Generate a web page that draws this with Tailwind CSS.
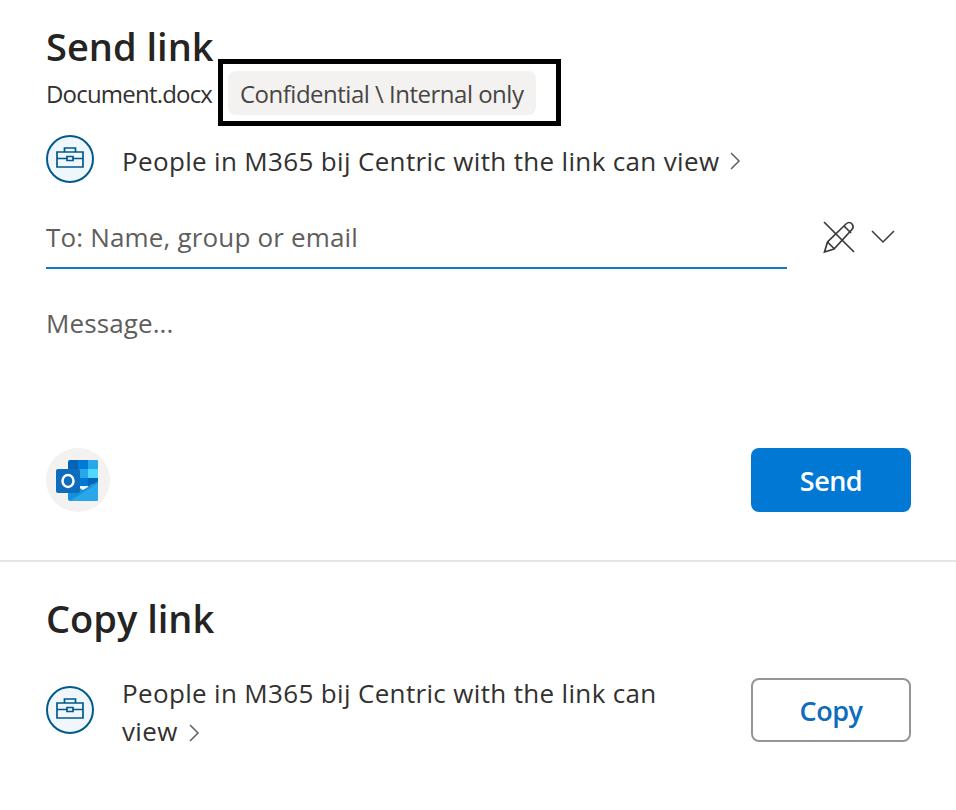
<!DOCTYPE html>
<html lang="en">
<head>
    <meta charset="UTF-8">
    <meta name="viewport" content="width=device-width, initial-scale=1.0">
    <script src="https://cdn.jsdelivr.net/npm/@tailwindcss/browser@4"></script>
    <title>Send link</title>
</head>
<body class="bg-white font-['Open_Sans',sans-serif] text-[#323130]">

<div class="relative w-[956px] h-[810px] overflow-hidden">
    <!-- send link -->
    <div class="h-[562px] border-b-2 border-[#e6e6e6] pl-[46px] pr-[45px] pt-[20px]">
        <h1 class="text-[38px] leading-[52px] font-semibold h-[52px] text-[#252423]">Send link</h1>

        <div class="flex items-center h-[44px] mt-[-1px]">
            <span class="text-[24px] tracking-[-0.8px] w-[182px] pt-[2px]">Document.docx</span>
            <span class="flex items-center w-[308px] h-[44px] rounded-lg bg-[#f3f2f1] pl-3 pt-[2px] text-[24px] tracking-[-0.5px] text-[#484644]">Confidential \ Internal only</span>
        </div>

        <div class="flex items-center h-[48px] mt-[20px]">
            <svg class="w-[48px] h-[48px] shrink-0" viewBox="0 0 48 48" fill="none">
                <circle cx="24" cy="24" r="23" fill="#eff6fc" stroke="#005a8c" stroke-width="2"/>
                <path d="M11 17h26v15H11zM11 23.500h10M27 23.500h10M18.500 17v-4h11v4M21 21.500h6v4h-6z" stroke="#005a8c" stroke-width="1.700"/>
            </svg>
            <span class="ml-[28px] pt-[4px] text-[26px] tracking-[0.34px]">People in M365 bij Centric with the link can view</span>
            <svg class="ml-[10px] mt-[4px] w-[12px] h-[20px]" viewBox="0 0 12 20" fill="none"><path d="M2 2l8 8-8 8" stroke="#605e5c" stroke-width="1.500"/></svg>
        </div>

        <div class="flex items-start mt-[26px]">
            <div class="w-[741px] h-[60px] border-b-2 border-[#0f7cbd] text-[26px] leading-[56px] tracking-[0.17px] text-[#605e5c]">To: Name, group or email</div>
            <svg class="ml-[35px] mt-[11px] w-[34px] h-[34px]" viewBox="0 0 34 34" fill="none" stroke="#3b3a39" stroke-width="1.700">
                <path d="M2 2l30 30"/>
                <path d="M2.500 32l3-10L24 4c2-2 4.500-2 6 0s1.500 4-.5 6L12 29z"/>
                <path d="M5.500 22l7 7M22 6l7 7"/>
            </svg>
            <svg class="ml-[15px] mt-[21px] w-[24px] h-[14px]" viewBox="0 0 24 14" fill="none"><path d="M1 1l11 11L23 1" stroke="#3b3a39" stroke-width="1.500"/></svg>
        </div>

        <div class="mt-[30px] h-[48px] text-[26px] leading-[48px] tracking-[0.1px] text-[#605e5c]">Message...</div>

        <div class="flex items-center justify-between mt-[101px]">
            <div class="flex items-center justify-center w-[64px] h-[64px] rounded-full bg-[#f3f2f1]">
                <svg class="w-[42px] h-[41px] mr-[2px]" viewBox="0 0 42 41">
                    <rect x="12" y="0" width="30" height="24" rx="2" fill="#0364b8"/>
                    <rect x="22" y="0" width="10" height="9" fill="#0078d4"/>
                    <path d="M32 0h8a2 2 0 0 1 2 2v7H32z" fill="#28a8ea"/>
                    <rect x="12" y="9" width="10" height="9" fill="#0078d4"/>
                    <rect x="22" y="9" width="10" height="9" fill="#28a8ea"/>
                    <rect x="32" y="9" width="10" height="9" fill="#50d9ff"/>
                    <rect x="22" y="18" width="10" height="8" fill="#0078d4"/>
                    <path d="M32 18h10v3l-10 6z" fill="#0364b8"/>
                    <path d="M12 21l15 9 15-9v18a2 2 0 0 1-2 2H14a2 2 0 0 1-2-2z" fill="#1490df"/>
                    <path d="M14 41l28-18v16a2 2 0 0 1-2 2z" fill="#28a8ea"/>
                    <rect x="0" y="9" width="24" height="24" rx="2" fill="#0f6cbd"/>
                    <ellipse cx="12" cy="21" rx="5.500" ry="6" fill="none" stroke="#fff" stroke-width="2.500"/>
                </svg>
            </div>
            <button class="w-[160px] h-[64px] pt-[2px] rounded-lg bg-[#0078d4] text-white text-[27px] font-semibold tracking-[-0.5px]">Send</button>
        </div>
    </div>

    <!-- copy link -->
    <div class="pl-[46px] pr-[45px] pt-[28px]">
        <h2 class="text-[38px] leading-[56px] font-semibold h-[56px] text-[#252423]">Copy link</h2>
        <div class="flex items-center justify-between h-[76px] mt-[26px]">
            <div class="flex items-center">
                <svg class="w-[48px] h-[48px] shrink-0" viewBox="0 0 48 48" fill="none">
                    <circle cx="24" cy="24" r="23" fill="#eff6fc" stroke="#005a8c" stroke-width="2"/>
                    <path d="M11 17h26v15H11zM11 23.500h10M27 23.500h10M18.500 17v-4h11v4M21 21.500h6v4h-6z" stroke="#005a8c" stroke-width="1.700"/>
                </svg>
                <p class="ml-[28px] mt-[4px] w-[560px] text-[26px] leading-[38px] tracking-[0.34px]">People in M365 bij Centric with the link can view
                    <svg class="inline ml-[3px] w-[12px] h-[20px] align-[-2px]" viewBox="0 0 12 20" fill="none"><path d="M2 2l8 8-8 8" stroke="#605e5c" stroke-width="1.500"/></svg>
                </p>
            </div>
            <button class="w-[160px] h-[64px] pt-[2px] rounded-lg border-2 border-[#979593] bg-white text-[#0f6cbd] text-[27px] font-semibold tracking-[-0.5px]">Copy</button>
        </div>
    </div>

    <!-- annotation frame drawn over the screenshot -->
    <div class="absolute left-[218px] top-[59px] w-[343px] h-[67px] border-[5px] border-black"></div>
</div>

</body>
</html>
